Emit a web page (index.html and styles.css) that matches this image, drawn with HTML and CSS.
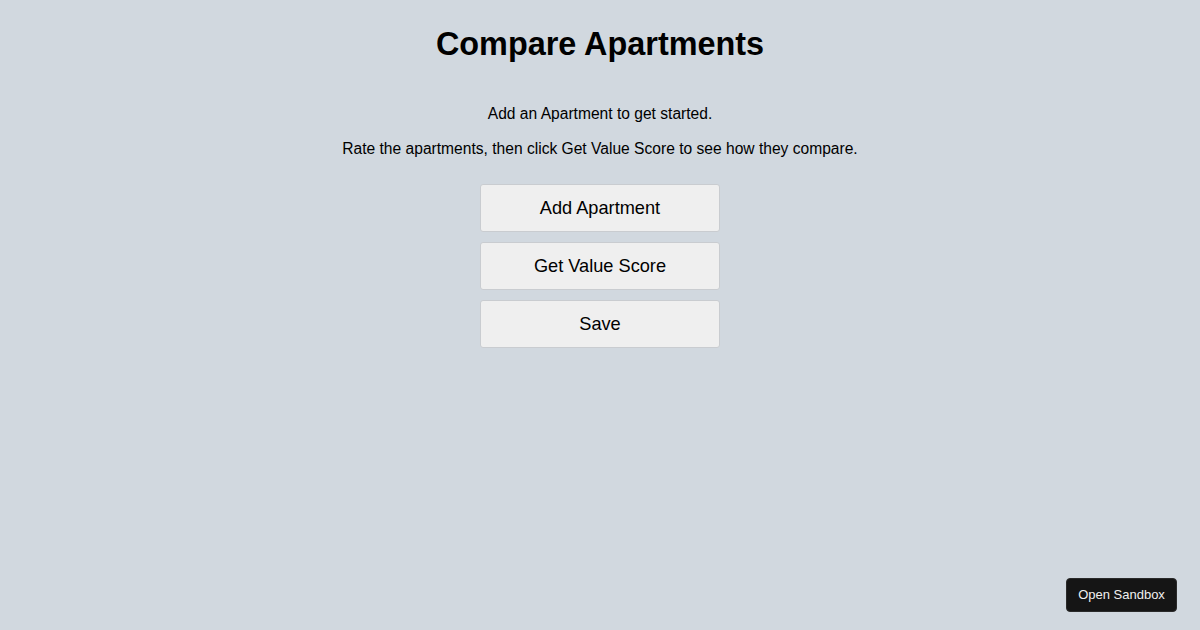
FILE: index.html
```html
<!DOCTYPE html>
<html>
<head>
<meta charset="utf-8">
<link rel="stylesheet" href="styles.css">
</head>
<body>
<main class="app">
  <h1 class="title">Compare Apartments</h1>
  <p class="intro">Add an Apartment to get started.</p>
  <p class="intro">Rate the apartments, then click Get Value Score to see how they compare.</p>
  <div class="actions">
    <button class="btn">Add Apartment</button>
    <button class="btn">Get Value Score</button>
    <button class="btn">Save</button>
  </div>
</main>
<button class="sandbox">Open Sandbox</button>
</body>
</html>
```
FILE: styles.css
```css
html, body {
  margin: 0;
  padding: 0;
  height: 100%;
}
body {
  background: #d1d8df;
  font-family: "Liberation Sans", Arial, sans-serif;
  color: #000;
}
.app {
  display: flex;
  flex-direction: column;
  align-items: center;
  padding-top: 24px;
}
.title {
  font-size: 32.4px;
  font-weight: bold;
  margin: 0 0 41px;
  line-height: 40px;
}
.intro {
  font-size: 15.6px;
  margin: 0 0 17px;
  line-height: 18px;
}
.actions {
  display: flex;
  flex-direction: column;
  gap: 10px;
  margin-top: 9px;
}
.btn {
  width: 240px;
  height: 48px;
  background: #efefef;
  border: 1px solid #c9ccd0;
  border-radius: 3px;
  font-family: "Liberation Sans", Arial, sans-serif;
  font-size: 18.2px;
  color: #000;
}
.sandbox {
  position: fixed;
  right: 23px;
  bottom: 18px;
  width: 111px;
  height: 34px;
  padding: 0 0 1px;
  background: #151515;
  color: #f0f0f0;
  border: 1px solid #2a2a2a;
  border-radius: 4px;
  font-family: "Liberation Sans", Arial, sans-serif;
  font-size: 13px;
}
```
